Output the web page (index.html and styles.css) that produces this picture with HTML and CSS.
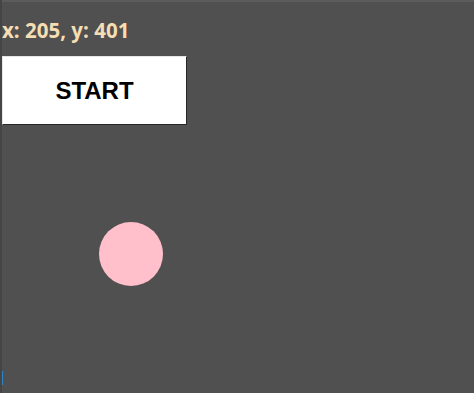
FILE: index.html
```html
<!DOCTYPE html>
<html>
<head>
<meta charset="utf-8">
<link rel="stylesheet" href="styles.css">
</head>
<body>
<div class="topline"></div>
<main class="stage">
  <div class="coords">x: 205, y: 401</div>
  <button class="start">START</button>
  <div class="ball-row"><div class="ball"></div></div>
</main>
<div class="edge-mark"></div>
</body>
</html>
```
FILE: styles.css
```css
html, body {
  margin: 0;
  padding: 0;
  width: 474px;
  height: 393px;
  overflow: hidden;
  background: #505050;
}
body {
  position: relative;
  border-left: 2px solid #454545;
  box-sizing: border-box;
}
.topline {
  height: 2px;
  background: #5c5c5c;
}
.stage {
  display: flex;
  flex-direction: column;
  align-items: flex-start;
}
.coords {
  font-family: "Open Sans", "Noto Sans", sans-serif;
  font-weight: bold;
  font-size: 20.5px;
  line-height: 27px;
  color: #f5deb3;
  margin-top: 15px;
  margin-left: 0;
}
.start {
  margin-top: 12px;
  width: 185px;
  height: 69px;
  background: #ffffff;
  border-style: solid;
  border-width: 1px;
  border-color: #e6e6e6 #262626 #262626 #e6e6e6;
  font-family: "Liberation Sans", Arial, sans-serif;
  font-weight: bold;
  font-size: 24px;
  color: #000;
  padding: 0;
}
.ball-row {
  margin-top: 97px;
  padding-left: 97px;
}
.ball {
  width: 64px;
  height: 64px;
  border-radius: 50%;
  background: #ffc0cb;
}
.edge-mark {
  position: absolute;
  left: -2px;
  top: 371px;
  width: 3px;
  height: 14px;
  background: #2f86c4;
}
```
